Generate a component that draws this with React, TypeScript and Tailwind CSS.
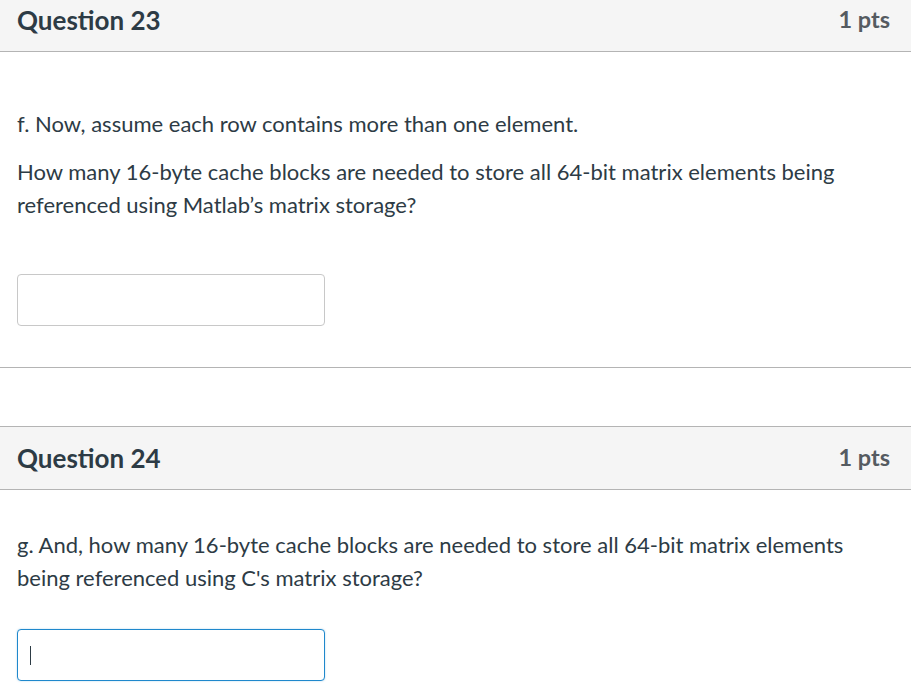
const font = { fontFamily: "Lato, 'Open Sans', sans-serif" };

const Header = ({ title, pts, top }: { title: string; pts: string; top?: boolean }) => (
  <div
    className={`flex h-[64px] items-center justify-between bg-[#f5f5f5] pl-[17px] pr-[21px] border-b border-[#b4b4b4] ${
      top ? "-mt-[12px]" : "border-t"
    }`}
  >
    <h2 className="text-[26px] font-bold leading-none text-[#2d3b45]">{title}</h2>
    <span className="text-[23.5px] font-bold leading-none text-[#555b61]">{pts}</span>
  </div>
);

export default function App() {
  return (
    <div className="min-h-screen bg-white overflow-hidden text-[#2d3b45]" style={font}>
      {/* Question 23 */}
      <div className="border-b border-[#b4b4b4]">
        <Header title="Question 23" pts="1 pts" top />
        <div className="px-[17px] pt-[55px] pb-[41px] text-[22px] leading-[33px]">
          <p>f. Now, assume each row contains more than one element.</p>
          <p className="mt-[15px]">
            How many 16-byte cache blocks are needed to store all 64-bit matrix elements being
            referenced using Matlab’s matrix storage?
          </p>
          <div className="mt-[53px] h-[52px] w-[308px] rounded-[4px] border border-[#c8c8c8] bg-white" />
        </div>
      </div>

      <div className="h-[58px]" />

      {/* Question 24 */}
      <div>
        <Header title="Question 24" pts="1 pts" />
        <div className="px-[17px] pt-[38px] pb-[20px] text-[22px] leading-[33px]">
          <p>
            g. And, how many 16-byte cache blocks are needed to store all 64-bit matrix elements
            being referenced using C's matrix storage?
          </p>
          <div className="mt-[35px] flex h-[52px] w-[308px] items-center rounded-[4px] border border-[#1f88cc] bg-white pl-[12px] shadow-[0_0_2px_rgba(31,136,204,0.35)]">
            <span className="h-[19px] w-px bg-[#2d3b45]" />
          </div>
        </div>
      </div>
    </div>
  );
}
